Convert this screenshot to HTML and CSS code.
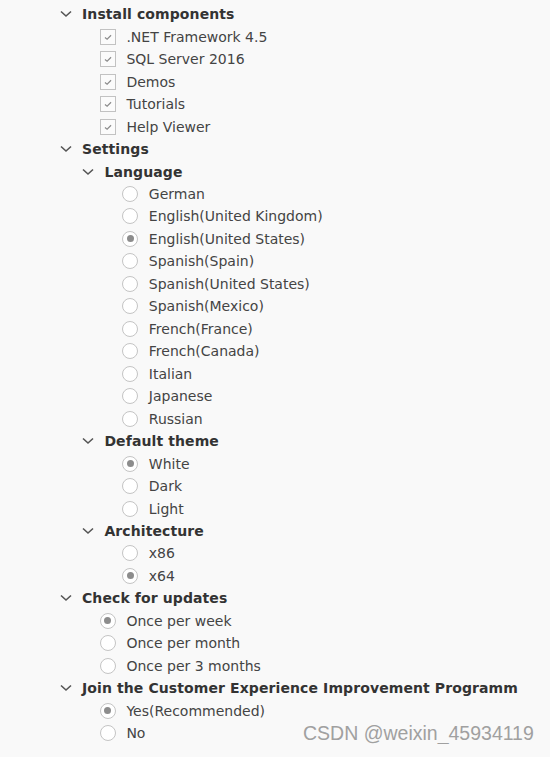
FILE: index.html
```html
<!DOCTYPE html>
<html>
<head>
<meta charset="utf-8">
<link rel="stylesheet" href="styles.css">
</head>
<body>
<div class="tree">
  <div class="row l0"><span class="chev"><svg viewBox="0 0 12 8" width="12" height="8"><path d="M1 1.5 L6 6 L11 1.5" /></svg></span><span class="head">Install components</span></div>
  <div class="row l1"><span class="cb"><svg viewBox="0 0 16 16" width="16" height="16"><path d="M4.5 8.5 L7 10.5 L11.5 6" /></svg></span><span class="lbl">.NET Framework 4.5</span></div>
  <div class="row l1"><span class="cb"><svg viewBox="0 0 16 16" width="16" height="16"><path d="M4.5 8.5 L7 10.5 L11.5 6" /></svg></span><span class="lbl">SQL Server 2016</span></div>
  <div class="row l1"><span class="cb"><svg viewBox="0 0 16 16" width="16" height="16"><path d="M4.5 8.5 L7 10.5 L11.5 6" /></svg></span><span class="lbl">Demos</span></div>
  <div class="row l1"><span class="cb"><svg viewBox="0 0 16 16" width="16" height="16"><path d="M4.5 8.5 L7 10.5 L11.5 6" /></svg></span><span class="lbl">Tutorials</span></div>
  <div class="row l1"><span class="cb"><svg viewBox="0 0 16 16" width="16" height="16"><path d="M4.5 8.5 L7 10.5 L11.5 6" /></svg></span><span class="lbl">Help Viewer</span></div>

  <div class="row l0"><span class="chev"><svg viewBox="0 0 12 8" width="12" height="8"><path d="M1 1.5 L6 6 L11 1.5" /></svg></span><span class="head">Settings</span></div>
  <div class="row l1"><span class="chev"><svg viewBox="0 0 12 8" width="12" height="8"><path d="M1 1.5 L6 6 L11 1.5" /></svg></span><span class="head">Language</span></div>
  <div class="row l2"><span class="rb"></span><span class="lbl">German</span></div>
  <div class="row l2"><span class="rb"></span><span class="lbl">English(United Kingdom)</span></div>
  <div class="row l2"><span class="rb on"></span><span class="lbl">English(United States)</span></div>
  <div class="row l2"><span class="rb"></span><span class="lbl">Spanish(Spain)</span></div>
  <div class="row l2"><span class="rb"></span><span class="lbl">Spanish(United States)</span></div>
  <div class="row l2"><span class="rb"></span><span class="lbl">Spanish(Mexico)</span></div>
  <div class="row l2"><span class="rb"></span><span class="lbl">French(France)</span></div>
  <div class="row l2"><span class="rb"></span><span class="lbl">French(Canada)</span></div>
  <div class="row l2"><span class="rb"></span><span class="lbl">Italian</span></div>
  <div class="row l2"><span class="rb"></span><span class="lbl">Japanese</span></div>
  <div class="row l2"><span class="rb"></span><span class="lbl">Russian</span></div>
  <div class="row l1"><span class="chev"><svg viewBox="0 0 12 8" width="12" height="8"><path d="M1 1.5 L6 6 L11 1.5" /></svg></span><span class="head">Default theme</span></div>
  <div class="row l2"><span class="rb on"></span><span class="lbl">White</span></div>
  <div class="row l2"><span class="rb"></span><span class="lbl">Dark</span></div>
  <div class="row l2"><span class="rb"></span><span class="lbl">Light</span></div>
  <div class="row l1"><span class="chev"><svg viewBox="0 0 12 8" width="12" height="8"><path d="M1 1.5 L6 6 L11 1.5" /></svg></span><span class="head">Architecture</span></div>
  <div class="row l2"><span class="rb"></span><span class="lbl">x86</span></div>
  <div class="row l2"><span class="rb on"></span><span class="lbl">x64</span></div>

  <div class="row l0"><span class="chev"><svg viewBox="0 0 12 8" width="12" height="8"><path d="M1 1.5 L6 6 L11 1.5" /></svg></span><span class="head">Check for updates</span></div>
  <div class="row l1"><span class="rb on"></span><span class="lbl">Once per week</span></div>
  <div class="row l1"><span class="rb"></span><span class="lbl">Once per month</span></div>
  <div class="row l1"><span class="rb"></span><span class="lbl">Once per 3 months</span></div>

  <div class="row l0"><span class="chev"><svg viewBox="0 0 12 8" width="12" height="8"><path d="M1 1.5 L6 6 L11 1.5" /></svg></span><span class="head">Join the Customer Experience Improvement Programm</span></div>
  <div class="row l1"><span class="rb on"></span><span class="lbl">Yes(Recommended)</span></div>
  <div class="row l1 last"><span class="rb"></span><span class="lbl">No</span><span class="mark">CSDN @weixin_45934119</span></div>
</div>
</body>
</html>
```
FILE: styles.css
```css
html, body {
  margin: 0;
  padding: 0;
  background: #f9f9f9;
}
.tree {
  padding-top: 3px;
  padding-left: 59px;
  font-family: "DejaVu Sans", Verdana, sans-serif;
  font-size: 14px;
  color: #444;
}
.row {
  display: flex;
  align-items: center;
  height: 22.47px;
  white-space: nowrap;
}
.l1 { padding-left: 22.4px; }
.l2 { padding-left: 44.8px; }
.chev {
  width: 23px;
  flex: none;
  display: flex;
  align-items: center;
}
.chev svg {
  margin-left: 1px;
}
.chev path {
  fill: none;
  stroke: #555;
  stroke-width: 1.6;
}
.head {
  font-weight: bold;
  color: #333;
  letter-spacing: 0.1px;
}
.cb {
  flex: none;
  display: flex;
  align-items: center;
  margin-left: 18.5px;
  margin-right: 10.5px;
}
.cb svg {
  display: block;
  flex: none;
  border: 1px solid #c2c2c2;
  background: #fbfbfb;
  box-sizing: border-box;
}
.cb path {
  fill: none;
  stroke: #8a8a8a;
  stroke-width: 1.3;
}
.rb {
  width: 16px;
  height: 16px;
  border: 1px solid #c4c4c4;
  border-radius: 50%;
  background: #fff;
  box-sizing: border-box;
  margin-left: 18.5px;
  margin-right: 10.5px;
  display: flex;
  align-items: center;
  justify-content: center;
  flex: none;
}
.rb.on::after {
  content: "";
  width: 7px;
  height: 7px;
  border-radius: 50%;
  background: #8c8c8c;
}
.lbl {
  color: #444;
}
.last { position: relative; }
.mark {
  position: absolute;
  left: 244px;
  top: 0;
  line-height: 22px;
  font-family: "Liberation Sans", Arial, sans-serif;
  font-size: 19.5px;
  color: #a0a0a0;
}
```
